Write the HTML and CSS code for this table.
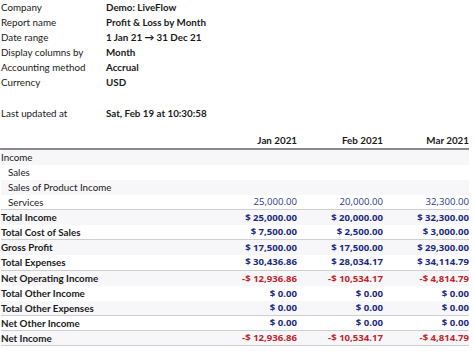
FILE: index.html
```html
<!DOCTYPE html>
<html lang="en">
<head>
  <meta charset="UTF-8">
  <title>Profit &amp; Loss by Month</title>
  <link rel="stylesheet" href="styles.css">
</head>
<body>
<div class="report">
  <div class="meta">
    <div class="meta-row"><span class="meta-key">Company</span><span class="meta-val">Demo: LiveFlow</span></div>
    <div class="meta-row"><span class="meta-key">Report name</span><span class="meta-val">Profit &amp; Loss by Month</span></div>
    <div class="meta-row"><span class="meta-key">Date range</span><span class="meta-val">1 Jan 21 → 31 Dec 21</span></div>
    <div class="meta-row"><span class="meta-key">Display columns by</span><span class="meta-val">Month</span></div>
    <div class="meta-row"><span class="meta-key">Accounting method</span><span class="meta-val">Accrual</span></div>
    <div class="meta-row"><span class="meta-key">Currency</span><span class="meta-val">USD</span></div>
    <div class="meta-row spacer"></div>
    <div class="meta-row"><span class="meta-key">Last updated at</span><span class="meta-val">Sat, Feb 19 at 10:30:58</span></div>
  </div>

  <div class="pl">
    <div class="row head"><span></span><span>Jan 2021</span><span>Feb 2021</span><span>Mar 2021</span></div>

    <div class="row alt"><span class="label">Income</span><span></span><span></span><span></span></div>
    <div class="row"><span class="label sub">Sales</span><span></span><span></span><span></span></div>
    <div class="row alt"><span class="label sub">Sales of Product Income</span><span></span><span></span><span></span></div>
    <div class="row line"><span class="label sub">Services</span><span class="num">25,000.00</span><span class="num">20,000.00</span><span class="num">32,300.00</span></div>
    <div class="row alt total"><span class="label">Total Income</span><span class="amt">$ 25,000.00</span><span class="amt">$ 20,000.00</span><span class="amt">$ 32,300.00</span></div>
    <div class="row total line"><span class="label">Total Cost of Sales</span><span class="amt">$ 7,500.00</span><span class="amt">$ 2,500.00</span><span class="amt">$ 3,000.00</span></div>
    <div class="row alt total"><span class="label">Gross Profit</span><span class="amt">$ 17,500.00</span><span class="amt">$ 17,500.00</span><span class="amt">$ 29,300.00</span></div>
    <div class="row total line"><span class="label">Total Expenses</span><span class="amt">$ 30,436.86</span><span class="amt">$ 28,034.17</span><span class="amt">$ 34,114.79</span></div>
    <div class="row alt total"><span class="label">Net Operating Income</span><span class="amt neg">-$ 12,936.86</span><span class="amt neg">-$ 10,534.17</span><span class="amt neg">-$ 4,814.79</span></div>
    <div class="row total"><span class="label">Total Other Income</span><span class="amt">$ 0.00</span><span class="amt">$ 0.00</span><span class="amt">$ 0.00</span></div>
    <div class="row alt total line"><span class="label">Total Other Expenses</span><span class="amt">$ 0.00</span><span class="amt">$ 0.00</span><span class="amt">$ 0.00</span></div>
    <div class="row total line"><span class="label">Net Other Income</span><span class="amt">$ 0.00</span><span class="amt">$ 0.00</span><span class="amt">$ 0.00</span></div>
    <div class="row alt total line"><span class="label">Net Income</span><span class="amt neg">-$ 12,936.86</span><span class="amt neg">-$ 10,534.17</span><span class="amt neg">-$ 4,814.79</span></div>
  </div>
</div>
</body>
</html>
```

FILE: styles.css
```css
body {
  margin: 0;
  padding: 0;
  background: #fff;
  color: #1a1a20;
  font-family: "Lato", "Liberation Sans", sans-serif;
  font-size: 9.8px;
}
.report {
  width: 468px;
  padding-left: 1px;
}
.meta-row {
  display: flex;
  height: 15.1px;
  line-height: 15px;
}
.meta-key {
  width: 105px;
}
.meta-val {
  font-weight: 700;
}

.pl {
  margin-top: 12px;
}
.row {
  display: grid;
  grid-template-columns: 1fr 86px 86px 86px;
  box-sizing: border-box;
  height: 15.1px;
  line-height: 15px;
  text-align: right;
  white-space: nowrap;
}
.row.head {
  height: 17px;
  font-weight: 700;
  border-bottom: 2px solid #8a8a8e;
  margin-left: -1px;
}
.row.alt {
  background: #f7f7f9;
}
.row.line {
  border-bottom: 1px solid #cfcfd3;
  line-height: 14px;
}
.label {
  text-align: left;
}
.sub {
  padding-left: 7px;
}
.total .label {
  font-weight: 700;
}
.num,
.amt {
  font-family: "Open Sans", "Liberation Sans", sans-serif;
  font-size: 9.6px;
  color: #2b3a8f;
}
.amt {
  font-weight: 700;
  color: #1b2a80;
}
.amt.neg {
  color: #c0252b;
}
```
